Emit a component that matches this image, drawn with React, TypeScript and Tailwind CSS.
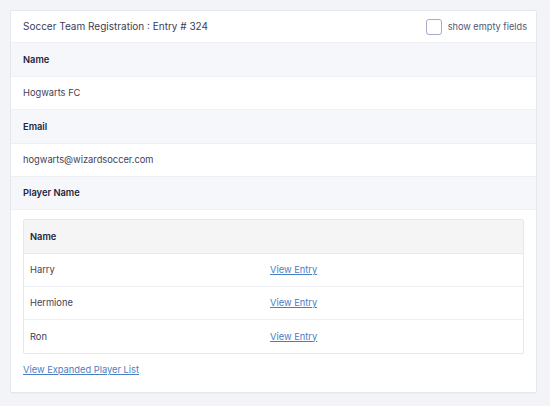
export default function App() {
  const fields = [
    { label: 'Name', value: 'Hogwarts FC' },
    { label: 'Email', value: 'hogwarts@wizardsoccer.com' },
  ];
  const players = ['Harry', 'Hermione', 'Ron'];

  return (
    <div className="min-h-screen bg-[#f3f4f8] pt-[10px] px-[10px] font-['Inter',sans-serif]">
      <div className="w-[527px] bg-white border border-[#e6e7ee] rounded-[2px] shadow-[0_1px_1px_rgba(0,0,0,0.03)]">
        <div className="h-[32px] flex items-center justify-between pl-[12px] pr-[9px] border-b border-[#eef0f4]">
          <span className="text-[10px] text-[#3b3d58]">Soccer Team Registration : Entry # 324</span>
          <label className="flex items-center gap-[6px]">
            <span className="w-[16px] h-[16px] rounded-[3px] border border-[#a9aac4] bg-white" />
            <span className="text-[9.2px] text-[#55576e]">show empty fields</span>
          </label>
        </div>
        {fields.map((f) => (
          <div key={f.label}>
            <div className="h-[34px] flex items-center px-[12px] bg-[#f6f7fa] border-b border-[#eef0f4]">
              <span className="text-[9.3px] font-semibold text-[#23253d]">{f.label}</span>
            </div>
            <div className="h-[33px] flex items-center px-[12px] border-b border-[#eef0f4]">
              <span className="text-[9.3px] text-[#3f4259]">{f.value}</span>
            </div>
          </div>
        ))}
        <div className="h-[33px] flex items-center px-[12px] bg-[#f6f7fa] border-b border-[#eef0f4]">
          <span className="text-[9.3px] font-semibold text-[#23253d]">Player Name</span>
        </div>
        <div className="px-[12px] pt-[9px] pb-[13px]">
          <div className="border border-[#e6e7eb] rounded-[2px]">
            <div className="h-[34px] flex items-center px-[6px] bg-[#f5f5f5] border-b border-[#e8e9ec]">
              <span className="text-[9.3px] font-semibold text-[#23253d]">Name</span>
            </div>
            {players.map((p, i) => (
              <div
                key={p}
                className={`h-[33px] grid grid-cols-[240px_1fr] items-center px-[6px] ${i < players.length - 1 ? 'border-b border-[#eeeff2]' : ''}`}
              >
                <span className="text-[9.3px] text-[#3f4259]">{p}</span>
                <a href="#" className="text-[9.3px] text-[#4a7ec4] underline justify-self-start">View Entry</a>
              </div>
            ))}
          </div>
          <a href="#" className="inline-block mt-[9px] text-[9.3px] text-[#4a7ec4] underline">View Expanded Player List</a>
        </div>
      </div>
    </div>
  );
}
